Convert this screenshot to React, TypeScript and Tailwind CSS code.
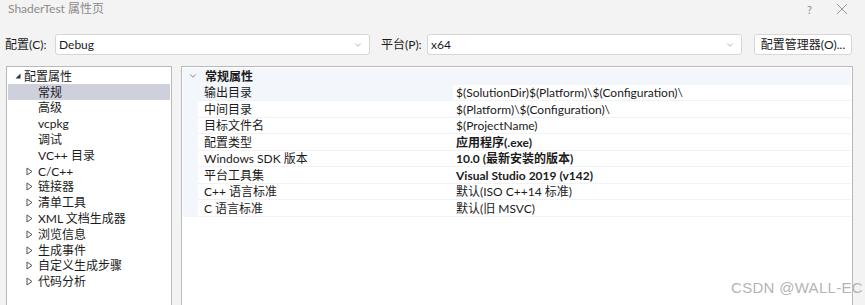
import { ChevronDown } from 'lucide-react';

const treeItems: { label: string; level: 0 | 1 | 2; selected?: boolean }[] = [
    { label: '配置属性', level: 0 },
    { label: '常规', level: 2, selected: true },
    { label: '高级', level: 2 },
    { label: 'vcpkg', level: 2 },
    { label: '调试', level: 2 },
    { label: 'VC++ 目录', level: 2 },
    { label: 'C/C++', level: 1 },
    { label: '链接器', level: 1 },
    { label: '清单工具', level: 1 },
    { label: 'XML 文档生成器', level: 1 },
    { label: '浏览信息', level: 1 },
    { label: '生成事件', level: 1 },
    { label: '自定义生成步骤', level: 1 },
    { label: '代码分析', level: 1 },
];

const props: { name: string; value: string; bold?: boolean }[] = [
    { name: '输出目录', value: '$(SolutionDir)$(Platform)\\$(Configuration)\\' },
    { name: '中间目录', value: '$(Platform)\\$(Configuration)\\' },
    { name: '目标文件名', value: '$(ProjectName)' },
    { name: '配置类型', value: '应用程序(.exe)', bold: true },
    { name: 'Windows SDK 版本', value: '10.0 (最新安装的版本)', bold: true },
    { name: '平台工具集', value: 'Visual Studio 2019 (v142)', bold: true },
    { name: 'C++ 语言标准', value: '默认(ISO C++14 标准)' },
    { name: 'C 语言标准', value: '默认(旧 MSVC)' },
];

function Combo({ value, width }: { value: string; width: string }) {
    return (
        <div className={`${width} h-[21px] flex items-center justify-between bg-white border border-[#d6d6d6] rounded-[3px] pl-[3px] pr-[6px]`}>
            <span>{value}</span>
            <ChevronDown className="w-[10px] h-[10px] text-[#8a8a8a]" strokeWidth={1.5} />
        </div>
    );
}

export default function App() {
    return (
        <div className="relative w-[865px] h-[305px] overflow-hidden bg-[#f3f3f3] text-[12px] leading-none text-[#1b1b1b] font-['Lato','Noto_Sans_CJK_SC',sans-serif] flex flex-col">
            {/* Title bar */}
            <div className="h-[26px] flex items-center justify-between pl-[8px] pr-[17px] shrink-0">
                <span className="text-[#8c8c8c] -mt-[8px]">ShaderTest 属性页</span>
                <div className="flex items-center gap-[24px] -mt-[8px] text-[#8c8c8c]">
                    <span className="text-[11px]">?</span>
                    <svg width="12" height="12" viewBox="0 0 12 12" className="text-[#9a9a9a]">
                        <path d="M1 1 L11 11 M11 1 L1 11" stroke="currentColor" strokeWidth="1" />
                    </svg>
                </div>
            </div>

            {/* Config row */}
            <div className="mt-[8px] h-[21px] flex items-center pl-[5px] shrink-0">
                <span className="w-[50px]">配置(C):</span>
                <Combo value="Debug" width="w-[315px]" />
                <span className="ml-[11px] w-[46px]">平台(P):</span>
                <Combo value="x64" width="w-[315px]" />
                <button className="ml-[12px] w-[98px] h-[21px] bg-white border border-[#d6d6d6] rounded-[3px] text-[12px] text-[#1b1b1b]">
                    配置管理器(O)...
                </button>
            </div>

            {/* Panels */}
            <div className="mt-[11px] flex-1 flex pl-[6px] pr-[12px] gap-[9px] min-h-0">
                {/* Tree */}
                <div className="w-[166px] bg-white border border-[#b9b9b9] border-b-0 pt-[1px] px-[1px]">
                    {treeItems.map((item) => (
                        <div
                            key={item.label}
                            className={`h-[15.8px] flex items-center pt-[2px] ${item.selected ? 'bg-[#ced0dc]' : ''}`}
                        >
                            {item.level === 0 && (
                                <>
                                    <svg width="6" height="6" viewBox="0 0 6 6" className="ml-[7px] mr-[3px] -mt-[1px]">
                                        <path d="M5.5 0.5 L5.5 5.5 L0.5 5.5 Z" fill="#333" />
                                    </svg>
                                    <span>{item.label}</span>
                                </>
                            )}
                            {item.level === 1 && (
                                <>
                                    <svg width="7" height="9" viewBox="0 0 7 9" className="ml-[18px] mr-[5px] -mt-[1px]">
                                        <path d="M1 1 L6 4.5 L1 8 Z" fill="none" stroke="#555" strokeWidth="1" />
                                    </svg>
                                    <span>{item.label}</span>
                                </>
                            )}
                            {item.level === 2 && <span className="ml-[30px]">{item.label}</span>}
                        </div>
                    ))}
                </div>

                {/* Property grid */}
                <div className="flex-1 bg-white border border-[#b9b9b9] border-b-0 pt-[1px] px-[1px]">
                    <div className="h-[16.5px] flex items-center bg-[#f3f6fb]">
                        <ChevronDown className="ml-[5px] w-[10px] h-[10px] text-[#444]" strokeWidth={1.5} />
                        <span className="ml-[7px] font-bold pt-[2px]">常规属性</span>
                    </div>
                    <div className="flex">
                        <div className="w-[15px] bg-[#f3f6fb]" />
                        <div className="flex-1">
                            {props.map((p, i) => (
                                <div key={p.name} className="h-[16.5px] flex border-b border-[#f0f2f6]">
                                    <div className={`w-[255px] flex items-center pl-[6px] pt-[2px] ${i === 0 ? 'bg-[#f3f6fb]' : ''}`}>
                                        {p.name}
                                    </div>
                                    <div className={`flex-1 flex items-center pl-[3px] pt-[2px] ${p.bold ? 'font-bold' : ''}`}>
                                        {p.value}
                                    </div>
                                </div>
                            ))}
                        </div>
                    </div>
                </div>
            </div>

            {/* Watermark */}
            <div className="absolute left-[731px] top-[280px] text-[15px] text-[#b4b4b4] font-['Liberation_Sans',sans-serif] tracking-[0.3px]">
                CSDN @WALL-EC
            </div>
        </div>
    );
}
